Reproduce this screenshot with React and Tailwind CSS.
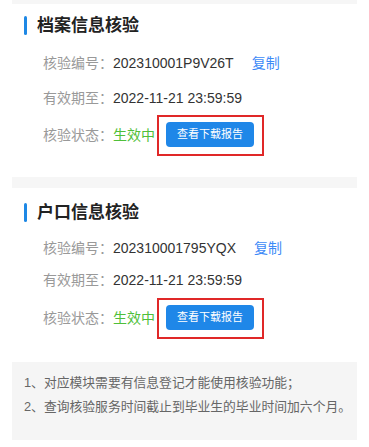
const records = [
  {
    title: '档案信息核验',
    code: '202310001P9V26T',
    expire: '2022-11-21 23:59:59',
    pad: 'pt-[11px] pb-[21px]',
    gaps: ['mt-[14px]', 'mt-[7px]', 'mt-[3px]'],
  },
  {
    title: '户口信息核验',
    code: '202310001795YQX',
    expire: '2022-11-21 23:59:59',
    pad: 'pt-[14px] pb-[21px]',
    gaps: ['mt-[12px]', 'mt-[4px]', 'mt-[4px]'],
  },
]

function RecordCard({ item }) {
  return (
    <div className={`bg-white px-3 ${item.pad}`}>
      {/* Title */}
      <div className="flex items-center h-[20px]">
        <span className="w-[3px] h-[19px] bg-[#1e88e5] rounded-sm"></span>
        <span className="ml-[10px] text-[17px] font-bold text-[#222] leading-none">{item.title}</span>
      </div>

      <div className="pl-[19px] text-[14px]">
        <div className={`${item.gaps[0]} h-[28px] flex items-center`}>
          <span className="text-[#999]">核验编号：</span>
          <span className="text-[#333]">{item.code}</span>
          <span className="ml-[18px] text-[#3d8af7]">复制</span>
        </div>
        <div className={`${item.gaps[1]} h-[28px] flex items-center`}>
          <span className="text-[#999]">有效期至：</span>
          <span className="text-[#333]">{item.expire}</span>
        </div>
        <div className={`${item.gaps[2]} flex items-center`}>
          <span className="text-[#999]">核验状态：</span>
          <span className="text-[#4fbf3a]">生效中</span>
          <div className="ml-[2px] inline-flex border-2 border-[#e02828] pl-[7px] pr-[8px] pt-[5px] pb-[7px]">
            <button className="w-[88px] h-[25px] rounded-[4px] bg-[#1f87e8] text-white text-[11px] flex items-center justify-center">
              查看下载报告
            </button>
          </div>
        </div>
      </div>
    </div>
  )
}

export default function App() {
  return (
    <div
      className="w-[369px] h-[447px] bg-white overflow-hidden"
      style={{ fontFamily: '"Liberation Sans", "Noto Sans CJK SC", sans-serif' }}
    >
      <div className="mx-3 bg-[#f6f6f6] pt-1 flex flex-col gap-[11px]">
        {records.map((item) => (
          <RecordCard key={item.code} item={item} />
        ))}
      </div>

      {/* Notes */}
      <div className="mx-3 mt-[2px] h-[78px] bg-[#f5f5f5] pl-3 pr-0 pt-[9px] text-[12.8px] leading-[24px] text-[#666] whitespace-nowrap">
        <p>1、对应模块需要有信息登记才能使用核验功能；</p>
        <p>2、查询核验服务时间截止到毕业生的毕业时间加六个月。</p>
      </div>
    </div>
  )
}
